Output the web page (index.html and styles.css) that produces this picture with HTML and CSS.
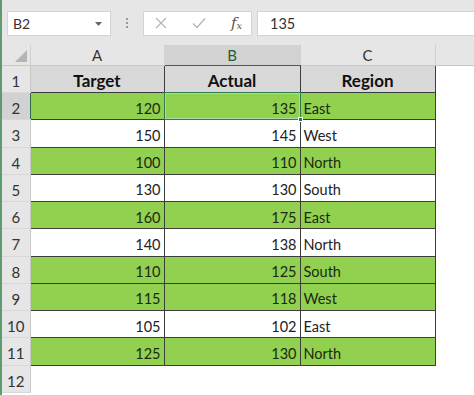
FILE: index.html
```html
<!DOCTYPE html>
<html>
<head>
<meta charset="utf-8">
<link rel="stylesheet" href="styles.css">
</head>
<body>
<div class="app">
  <div class="toolbar">
    <div class="namebox"><span>B2</span><svg class="caret" width="7" height="4" viewBox="0 0 7 4"><path d="M0 0h7L3.5 4z" fill="#666"/></svg></div>
    <div class="dots"><i></i><i></i><i></i></div>
    <div class="fxbox">
      <svg class="ico" width="12" height="12" viewBox="0 0 12 12"><path d="M1 1L11 11M11 1L1 11" stroke="#b4b4b4" stroke-width="1.2" fill="none"/></svg>
      <svg class="ico" width="14" height="12" viewBox="0 0 14 12"><path d="M1 6.5L5 10.5L13 1.5" stroke="#b4b4b4" stroke-width="1.3" fill="none"/></svg>
      <span class="fx">f<sub>x</sub></span>
    </div>
    <div class="formula">135</div>
  </div>
  <table class="sheet">
    <colgroup><col class="c0"><col class="ca"><col class="cb"><col class="cc"><col></colgroup>
    <tr class="colhead">
      <th class="corner"><span class="tri"></span></th><th>A</th><th class="sel">B</th><th>C</th><th class="blank"></th>
    </tr>
    <tr class="r1"><th class="rh">1</th><td class="hd">Target</td><td class="hd">Actual</td><td class="hd">Region</td><td class="e"></td></tr>
    <tr class="g"><th class="rh selr">2</th><td class="n">120</td><td class="n cur">135</td><td class="t">East</td><td class="e"></td></tr>
    <tr class="w"><th class="rh">3</th><td class="n">150</td><td class="n">145</td><td class="t">West</td><td class="e"></td></tr>
    <tr class="g"><th class="rh">4</th><td class="n">100</td><td class="n">110</td><td class="t">North</td><td class="e"></td></tr>
    <tr class="w"><th class="rh">5</th><td class="n">130</td><td class="n">130</td><td class="t">South</td><td class="e"></td></tr>
    <tr class="g"><th class="rh">6</th><td class="n">160</td><td class="n">175</td><td class="t">East</td><td class="e"></td></tr>
    <tr class="w"><th class="rh">7</th><td class="n">140</td><td class="n">138</td><td class="t">North</td><td class="e"></td></tr>
    <tr class="g"><th class="rh">8</th><td class="n">110</td><td class="n">125</td><td class="t">South</td><td class="e"></td></tr>
    <tr class="g"><th class="rh">9</th><td class="n">115</td><td class="n">118</td><td class="t">West</td><td class="e"></td></tr>
    <tr class="w"><th class="rh">10</th><td class="n">105</td><td class="n">102</td><td class="t">East</td><td class="e"></td></tr>
    <tr class="g"><th class="rh">11</th><td class="n">125</td><td class="n">130</td><td class="t">North</td><td class="e"></td></tr>
    <tr class="empty"><th class="rh">12</th><td></td><td></td><td></td><td></td></tr>
  </table>
</div>
</body>
</html>
```
FILE: styles.css
```css
html, body { margin: 0; padding: 0; background: #fff; }
body { font-family: Lato, "Liberation Sans", sans-serif; color: #222; }
.app { width: 472px; height: 395px; border-left: 2px solid #5e9c70; overflow: hidden; background: #fff; }

.toolbar { height: 45px; background: #e6e6e6; display: flex; align-items: center; padding-top: 1px; box-sizing: border-box; }
.namebox { margin-left: 5px; width: 104px; height: 25px; box-sizing: border-box; background: #fff; border: 1px solid #d4d4d4; display: flex; align-items: center; justify-content: space-between; padding: 0 8px 0 5px; font-size: 14px; color: #333; }
.caret { margin-top: 1px; }
.dots { width: 32px; display: flex; flex-direction: column; align-items: center; gap: 2px; }
.dots i { width: 2px; height: 2px; background: #9a9a9a; display: block; }
.fxbox { width: 109px; height: 25px; box-sizing: border-box; background: #fff; border: 1px solid #d4d4d4; display: flex; align-items: center; padding-left: 11px; }
.fxbox .ico:nth-child(2) { margin-left: 25px; }
.fx { margin-left: 25px; font-family: "DejaVu Serif", "Liberation Serif", serif; font-style: italic; font-size: 15px; color: #555; line-height: 1; }
.fx sub { font-size: 10px; vertical-align: -1px; }
.formula { margin-left: 5px; flex: 1; height: 25px; box-sizing: border-box; background: #fff; border: 1px solid #d4d4d4; border-right: none; font-size: 14.5px; color: #333; padding-left: 12px; display: flex; align-items: center; }

.sheet { border-collapse: collapse; table-layout: fixed; width: 472px; }
.c0 { width: 28px; }
.ca { width: 134px; }
.cb { width: 136px; }
.cc { width: 135px; }

.colhead th { height: 19.5px; padding: 0; background: #e6e6e6; font-weight: normal; font-size: 15px; color: #333; border-right: 1px solid #d0d0d0; border-bottom: 1px solid #c8c8c8; line-height: 18px; }
.colhead th.sel { background: #d2d2d2; color: #1e5e38; border-bottom: 1px solid #2f6b47; }
.colhead th.blank { border-right: none; }
.corner { position: relative; }
.tri { position: absolute; right: 3px; bottom: 3px; width: 0; height: 0; border-left: 12px solid transparent; border-bottom: 12px solid #b5b5b5; }

.rh { height: 27.25px; padding: 0; background: #e6e6e6; font-weight: normal; font-size: 15px; color: #333; text-align: center; border-right: 1px solid #c8c8c8; border-bottom: 1px solid #d8d8d8; padding-top: 4px; box-sizing: border-box; }
.r1 .rh { height: 27.5px; }
.rh.selr { background: #d2d2d2; border-right: 1px solid #2f6b47; }

td { padding: 0 4px; font-size: 14.5px; height: 27.25px; box-sizing: border-box; }
td.hd { background: #d9d9d9; font-weight: bold; font-size: 17px; text-align: center; border: 1px solid #3c3c3c; color: #111; padding-top: 3px; }
td.n { text-align: right; border: 1px solid #3c3c3c; padding-top: 4px; padding-right: 3px; }
td.t { text-align: left; border: 1px solid #3c3c3c; padding-top: 4px; padding-left: 3px; }
tr.g td.n, tr.g td.t { background: #92d050; color: #1a2a10; }
tr.w td.n, tr.w td.t { background: #fff; }
td.e { border: none; border-left: 1px solid #3c3c3c; }
.empty td { border: none; }

td.cur { position: relative; }
td.cur::after { content: ""; position: absolute; left: -1px; top: -1px; right: -1px; bottom: -1px; border: 1px solid #2f7a4f; box-shadow: inset 0 0 0 1px #a9dca0; }
td.cur::before { content: ""; position: absolute; right: -3px; bottom: -3px; width: 5px; height: 5px; background: #2f7a4f; border: 1px solid #fff; box-sizing: border-box; z-index: 2; }
```
